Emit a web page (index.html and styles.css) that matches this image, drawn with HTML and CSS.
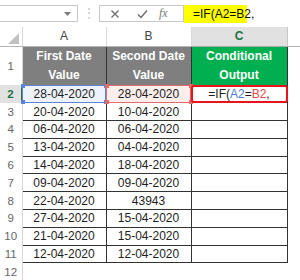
FILE: index.html
```html
<!DOCTYPE html>
<html>
<head>
<meta charset="utf-8">
<link rel="stylesheet" href="styles.css">
</head>
<body>
<div class="formula-bar">
  <div class="name-box">
    <svg class="dd" width="7" height="4" viewBox="0 0 7 4"><path d="M0 0h7L3.5 4z" fill="#7a7a7a"/></svg>
  </div>
  <div class="grip">⋮</div>
  <div class="fx-box">
    <svg class="ico" width="10" height="10" viewBox="0 0 10 10"><path d="M1.5 1.5l7 7M8.5 1.5l-7 7" stroke="#6b6b6b" stroke-width="1.3"/></svg>
    <svg class="ico" width="11" height="10" viewBox="0 0 11 10"><path d="M1 5.5l3 3 6-7" stroke="#6b6b6b" stroke-width="1.4" fill="none"/></svg>
    <span class="fx">fx</span>
  </div>
  <div class="formula"><span class="hl">=IF(A2=B2,</span></div>
</div>

<table class="sheet">
  <colgroup>
    <col class="c-rh"><col class="c-a"><col class="c-b"><col class="c-c"><col class="c-x">
  </colgroup>
  <tr class="r-cols">
    <th class="corner"><span class="tri"></span></th>
    <th class="colh">A</th>
    <th class="colh">B</th>
    <th class="colh sel">C</th>
    <th class="colh rest"></th>
  </tr>
  <tr class="r-head">
    <th class="rowh">1</th>
    <td class="hd gray">First Date<br>Value</td>
    <td class="hd gray">Second Date<br>Value</td>
    <td class="hd green">Conditional<br>Output</td>
    <td class="none"></td>
  </tr>
  <tr>
    <th class="rowh sel">2</th>
    <td class="ref blue">28-04-2020<i class="k tl"></i><i class="k tr"></i><i class="k bl"></i><i class="k br"></i></td>
    <td class="ref red">28-04-2020<i class="k tl"></i><i class="k tr"></i><i class="k bl"></i><i class="k br"></i></td>
    <td class="edit"><span class="ring">=IF(<span class="t-blue">A2</span>=<span class="t-red">B2</span>,</span></td>
    <td class="none"></td>
  </tr>
  <tr><th class="rowh">3</th><td>20-04-2020</td><td>10-04-2020</td><td></td><td class="none"></td></tr>
  <tr><th class="rowh">4</th><td>06-04-2020</td><td>06-04-2020</td><td></td><td class="none"></td></tr>
  <tr><th class="rowh">5</th><td>13-04-2020</td><td>04-04-2020</td><td></td><td class="none"></td></tr>
  <tr><th class="rowh">6</th><td>14-04-2020</td><td>18-04-2020</td><td></td><td class="none"></td></tr>
  <tr><th class="rowh">7</th><td>09-04-2020</td><td>09-04-2020</td><td></td><td class="none"></td></tr>
  <tr><th class="rowh">8</th><td>22-04-2020</td><td>43943</td><td></td><td class="none"></td></tr>
  <tr><th class="rowh">9</th><td>27-04-2020</td><td>15-04-2020</td><td></td><td class="none"></td></tr>
  <tr><th class="rowh">10</th><td>21-04-2020</td><td>15-04-2020</td><td></td><td class="none"></td></tr>
  <tr><th class="rowh">11</th><td>12-04-2020</td><td>12-04-2020</td><td></td><td class="none"></td></tr>
  <tr class="r-empty"><th class="rowh">12</th><td class="none"></td><td class="none"></td><td class="none"></td><td class="none"></td></tr>
</table>
</body>
</html>
```

FILE: styles.css
```css
* { box-sizing: border-box; }

html, body {
  margin: 0;
  background: #fff;
  width: 300px;
  height: 280px;
  overflow: hidden;
  font-family: "Liberation Sans", Arial, sans-serif;
}

/* formula bar */
.formula-bar {
  display: flex;
  align-items: center;
  height: 24px;
  padding-top: 3px;
  margin-bottom: 3px;
}

.name-box {
  width: 78px;
  height: 17px;
  border: 1px solid #c8c8c8;
  border-left: none;
  display: flex;
  align-items: center;
  justify-content: flex-end;
  padding-right: 6px;
}

.grip {
  width: 21px;
  text-align: center;
  color: #c4c4c4;
  font-size: 12px;
  line-height: 17px;
}

.fx-box {
  width: 84px;
  height: 17px;
  border: 1px solid #c8c8c8;
  border-right: none;
  display: flex;
  align-items: center;
  padding-left: 10px;
  gap: 17px;
}

.ico { display: block; }

.fx {
  font-family: "Liberation Serif", serif;
  font-style: italic;
  color: #777;
  font-size: 12px;
  margin-left: -6px;
}

.formula {
  flex: 1;
  height: 17px;
  border-left: 1px solid #c8c8c8;
  display: flex;
  align-items: center;
}

.hl {
  background: #ffff00;
  height: 18px;
  line-height: 18px;
  width: 63px;
  padding-left: 9px;
  font-size: 12px;
  color: #111;
}

/* worksheet grid */
.sheet {
  border-collapse: collapse;
  table-layout: fixed;
  width: 300px;
  font-size: 12px;
}

.c-rh { width: 22px; }
.c-a { width: 84px; }
.c-b { width: 85px; }
.c-c { width: 96px; }
.c-x { width: 13px; }

.sheet tr { height: 17.8px; }
.sheet tr.r-cols { height: 19px; }
.sheet tr.r-head { height: 39px; }

.sheet td, .sheet th {
  padding: 0;
  text-align: center;
  vertical-align: middle;
  font-weight: normal;
  white-space: nowrap;
  overflow: visible;
}

.sheet td {
  border: 1px solid #333;
  color: #1e1e1e;
  position: relative;
}

.sheet td.none { border: none; }

.sheet .corner {
  position: relative;
  border-right: 1px solid #dadada;
  border-bottom: 1px solid #b4b4b4;
}

.tri {
  position: absolute;
  right: 3px;
  bottom: 2px;
  width: 0;
  height: 0;
  border-left: 11px solid transparent;
  border-bottom: 11px solid #c2c2c2;
}

.sheet .colh {
  color: #444;
  border-right: 1px solid #dadada;
  border-bottom: 1px solid #b4b4b4;
}

.sheet .colh.sel {
  background: #e1e1e1;
  color: #217346;
  font-weight: bold;
  border-bottom: 1px solid #a9a9a9;
  border-right: 1px solid #c6c6c6;
}

.sheet .colh.rest { border-right: none; }

.sheet .rowh {
  color: #666;
  font-size: 11.5px;
  border-right: 1px solid #d8d8d8;
}

.sheet .rowh.sel {
  background: #e1e1e1;
  color: #217346;
  font-weight: bold;
  border-right: 2px solid #217346;
}

.sheet .hd {
  color: #fff;
  font-weight: bold;
  line-height: 19px;
  font-size: 12px;
}

.sheet .hd.gray { background: #7f7f7f; }
.sheet .hd.green { background: #00b050; }

/* formula reference highlights */
.sheet .ref.blue {
  background: #eef2fb;
  outline: 1px solid #5b83d6;
  outline-offset: -1px;
}

.sheet .ref.red {
  background: #fdeeee;
  outline: 1px solid #e46a6a;
  outline-offset: -1px;
}

.k {
  position: absolute;
  width: 4px;
  height: 4px;
}

.blue .k { background: #5b83d6; }
.red .k { background: #e46a6a; }

.k.tl { left: -2px; top: -2px; }
.k.tr { right: -2px; top: -2px; }
.k.bl { left: -2px; bottom: -2px; }
.k.br { right: -2px; bottom: -2px; }

.ring {
  display: block;
  margin: -1px;
  height: 18px;
  line-height: 15px;
  border: 2px solid #e8141b;
  border-radius: 3px;
  color: #1e1e1e;
}

.t-blue { color: #4a7fdc; }
.t-red { color: #e04848; }

.sheet .r-empty td { border: none; }
```
